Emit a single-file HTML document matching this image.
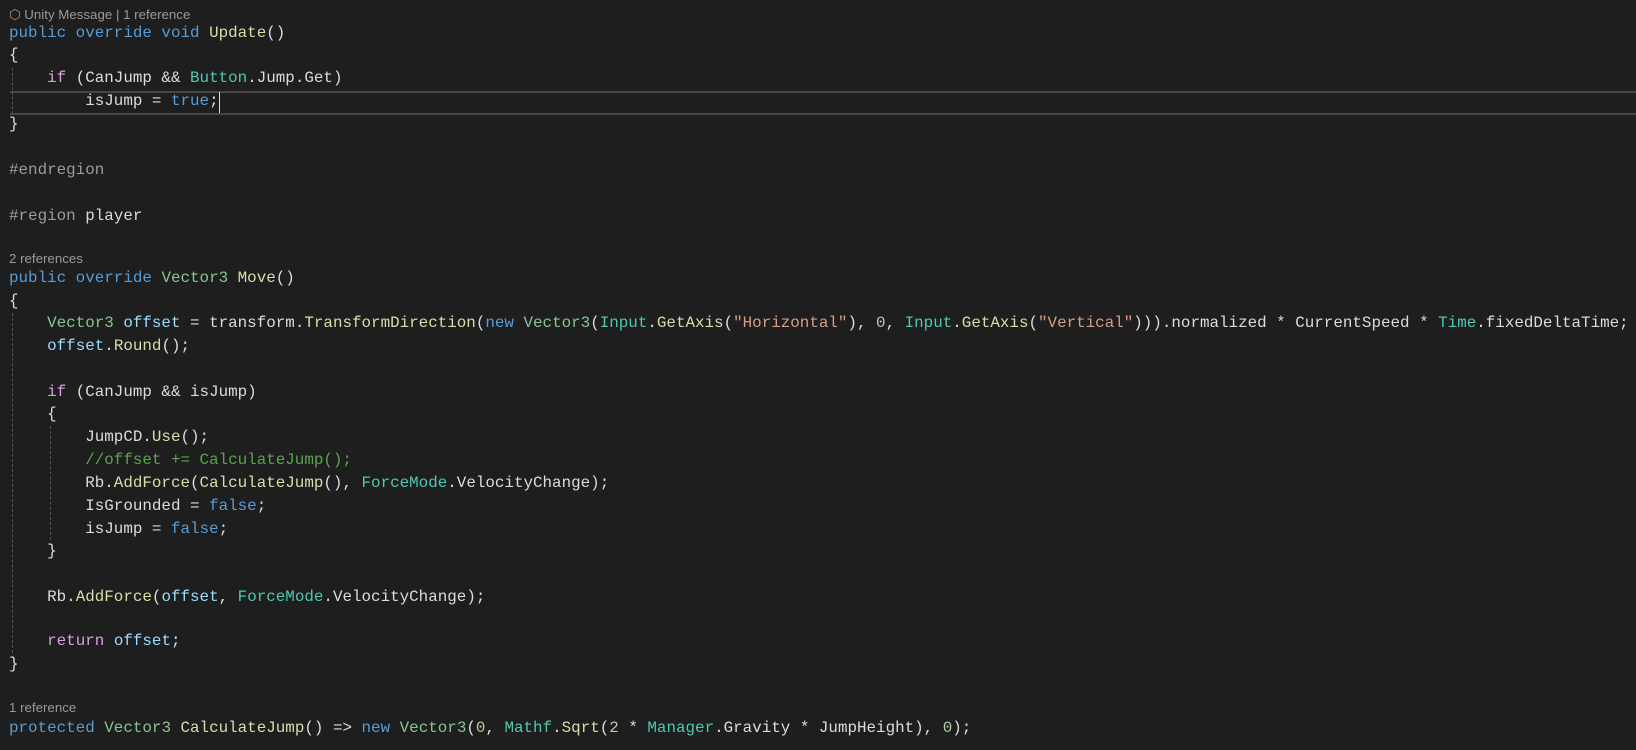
<!DOCTYPE html>
<html><head><meta charset="utf-8"><style>
html,body{margin:0;padding:0;background:#1e1e1e;width:1636px;height:750px;overflow:hidden}
.l{position:absolute;left:9px;height:23px;line-height:23px;font-family:"Liberation Mono",monospace;font-size:15.88px;color:#dcdcdc;white-space:pre}
.c{position:absolute;left:9px;font-family:"Liberation Sans",sans-serif;font-size:13.3px;color:#999;white-space:pre;line-height:16px}
.k{color:#569cd6}.f{color:#d8a0df}.t{color:#86c691}.cl{color:#4ec9b0}.m{color:#dcdcaa}.v{color:#9cdcfe}.s{color:#d69d85}.cm{color:#57a64a}.n{color:#b5cea8}.p{color:#9b9b9b}
.g{position:absolute;width:0;border-left:1px dashed #555}
</style></head><body>
<div style="position:absolute;left:10px;top:91px;right:0;height:20px;border-top:2px solid #464646;border-bottom:2px solid #464646"></div>
<div style="position:absolute;left:219px;top:92px;width:1px;height:21px;background:#dcdcdc"></div>
<div class="g" style="left:12px;top:68px;height:46px"></div>
<div class="g" style="left:12px;top:313px;height:340px"></div>
<div class="g" style="left:50px;top:426px;height:114px"></div>
<div class="c" style="top:7px">⬡ Unity Message | 1 reference</div>
<div class="l" style="top:22px"><span class="k">public override void</span> <span class="m">Update</span>()</div>
<div class="l" style="top:44px">{</div>
<div class="l" style="top:67px">    <span class="f">if</span> (CanJump &amp;&amp; <span class="cl">Button</span>.Jump.Get)</div>
<div class="l" style="top:90px">        isJump = <span class="k">true</span>;</div>
<div class="l" style="top:113px">}</div>
<div class="l" style="top:159px"><span class="p">#endregion</span></div>
<div class="l" style="top:205px"><span class="p">#region</span> player</div>
<div class="c" style="top:251px">2 references</div>
<div class="l" style="top:267px"><span class="k">public override</span> <span class="t">Vector3</span> <span class="m">Move</span>()</div>
<div class="l" style="top:290px">{</div>
<div class="l" style="top:312px">    <span class="t">Vector3</span> <span class="v">offset</span> = transform.<span class="m">TransformDirection</span>(<span class="k">new</span> <span class="t">Vector3</span>(<span class="cl">Input</span>.<span class="m">GetAxis</span>(<span class="s">"Horizontal"</span>), <span class="n">0</span>, <span class="cl">Input</span>.<span class="m">GetAxis</span>(<span class="s">"Vertical"</span>))).normalized * CurrentSpeed * <span class="cl">Time</span>.fixedDeltaTime;</div>
<div class="l" style="top:335px">    <span class="v">offset</span>.<span class="m">Round</span>();</div>
<div class="l" style="top:381px">    <span class="f">if</span> (CanJump &amp;&amp; isJump)</div>
<div class="l" style="top:403px">    {</div>
<div class="l" style="top:426px">        JumpCD.<span class="m">Use</span>();</div>
<div class="l" style="top:449px">        <span class="cm">//offset += CalculateJump();</span></div>
<div class="l" style="top:472px">        Rb.<span class="m">AddForce</span>(<span class="m">CalculateJump</span>(), <span class="cl">ForceMode</span>.VelocityChange);</div>
<div class="l" style="top:495px">        IsGrounded = <span class="k">false</span>;</div>
<div class="l" style="top:518px">        isJump = <span class="k">false</span>;</div>
<div class="l" style="top:540px">    }</div>
<div class="l" style="top:586px">    Rb.<span class="m">AddForce</span>(<span class="v">offset</span>, <span class="cl">ForceMode</span>.VelocityChange);</div>
<div class="l" style="top:630px">    <span class="f">return</span> <span class="v">offset</span>;</div>
<div class="l" style="top:653px">}</div>
<div class="c" style="top:700px">1 reference</div>
<div class="l" style="top:717px"><span class="k">protected</span> <span class="t">Vector3</span> <span class="m">CalculateJump</span>() =&gt; <span class="k">new</span> <span class="t">Vector3</span>(<span class="n">0</span>, <span class="cl">Mathf</span>.<span class="m">Sqrt</span>(<span class="n">2</span> * <span class="cl">Manager</span>.Gravity * JumpHeight), <span class="n">0</span>);</div>
</body></html>
